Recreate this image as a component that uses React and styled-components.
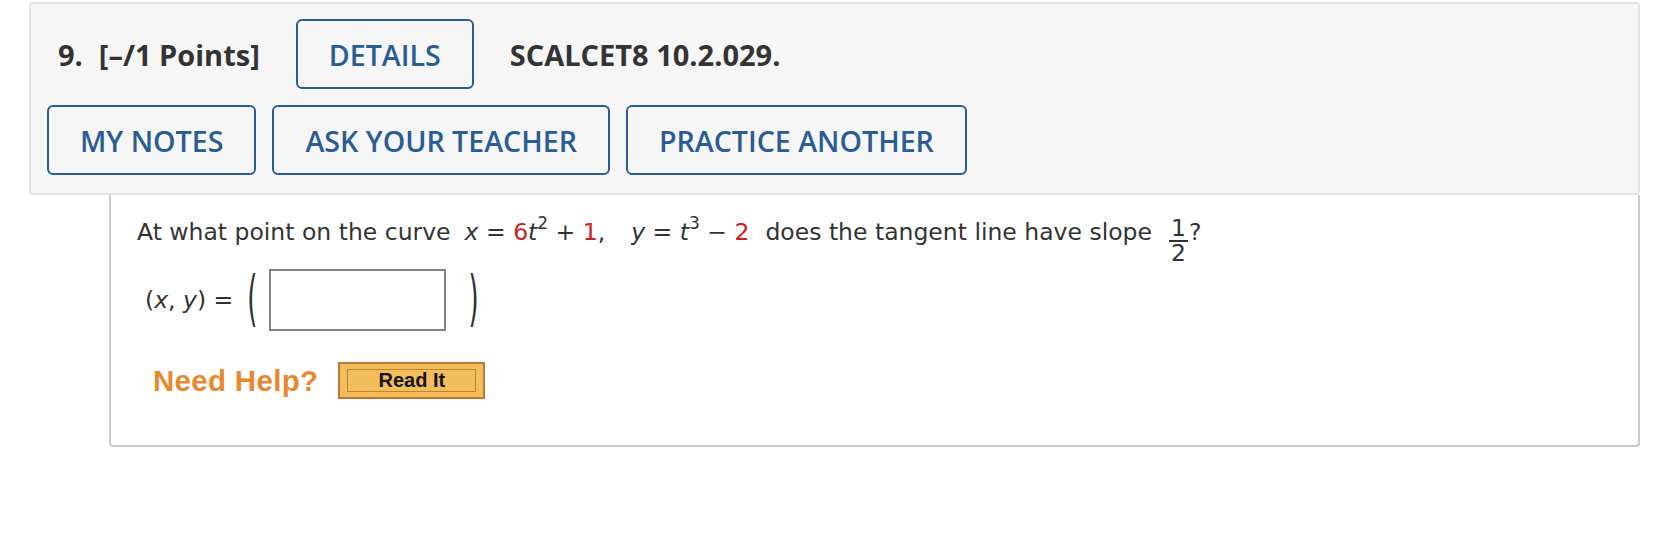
import React from "react";
import styled, { createGlobalStyle } from "styled-components";

const Global = createGlobalStyle`
  html, body { margin: 0; padding: 0; background: #ffffff; }
  * { box-sizing: border-box; }
`;

const Page = styled.div`
  padding: 2px 24px 0 29px;
`;

const Header = styled.div`
  background: #f6f6f6;
  border: 2px solid #e2e2e2;
  border-radius: 4px;
  padding: 15px 16px 18px 16px;
  display: flex;
  flex-direction: column;
  gap: 16px;
  font-family: "Open Sans", "Liberation Sans", sans-serif;
`;

const Row = styled.div`
  display: flex;
  align-items: center;
  gap: ${(p) => p.$gap || 16}px;
`;

const Title = styled.div`
  display: flex;
  align-items: baseline;
  margin-left: 11px;
  font-size: 29px;
  font-weight: 700;
  color: #333333;
  gap: 16px;
  margin-right: 20px;
`;

const OutlineButton = styled.button`
  height: 70px;
  padding: 0 31px;
  border: 2px solid #2a5d91;
  border-radius: 6px;
  background: transparent;
  color: #2a5d91;
  font-family: "Open Sans", "Liberation Sans", sans-serif;
  font-size: 28.6px;
  font-weight: 600;
  white-space: nowrap;
  cursor: pointer;
`;

const Ref = styled.div`
  margin-left: 20px;
  font-size: 29px;
  font-weight: 700;
  color: #333333;
`;

const Body = styled.div`
  margin-left: 80px;
  border: 2px solid #cbcbcb;
  border-top: none;
  border-radius: 0 0 4px 4px;
  padding: 22px 26px 46px;
  display: flex;
  flex-direction: column;
  font-family: "DejaVu Sans", Verdana, sans-serif;
  font-size: 23.5px;
  color: #333333;
`;

const Question = styled.div`
  line-height: 28px;
  white-space: nowrap;
`;

const MathSpan = styled.span`
  margin: 0 ${(p) => p.$right}px 0 ${(p) => p.$left}px;
`;

const Var = styled.i`
  font-style: italic;
`;

const Num = styled.span`
  color: #cc2121;
`;

const Sup = styled.sup`
  font-size: 17px;
  line-height: 0;
  position: relative;
  top: -2px;
`;

const Fraction = styled.span`
  display: inline-flex;
  flex-direction: column;
  align-items: center;
  vertical-align: 4px;
  margin-left: 17px;
  margin-right: 1px;
  line-height: 23px;
`;

const FracTop = styled.span`
  padding: 0 2px;
  border-bottom: 2px solid #333333;
`;

const FracBottom = styled.span``;

const AnswerRow = styled.div`
  display: flex;
  align-items: center;
  height: 64px;
  margin-top: 3px;
  margin-left: 8px;
`;

const Label = styled.span`
  white-space: nowrap;
  margin-right: 14px;
`;

const Paren = styled.span`
  display: inline-block;
  font-size: 26px;
  font-weight: 400;
  transform: scale(1, 2.3);
  color: #333333;
  margin: 0 ${(p) => p.$right}px 0 ${(p) => p.$left}px;
  position: relative;
  top: -2px;
`;

const AnswerBox = styled.input`
  width: 177px;
  height: 62px;
  border: 2px solid #858585;
  background: #ffffff;
  outline: none;
  padding: 0;
`;

const HelpRow = styled.div`
  display: flex;
  align-items: center;
  gap: 20px;
  margin-top: 30px;
  margin-left: 16px;
`;

const NeedHelp = styled.span`
  font-family: "Liberation Sans", Arial, sans-serif;
  font-weight: 700;
  font-size: 29.5px;
  color: #e8892f;
  letter-spacing: 0.3px;
`;

const ReadIt = styled.button`
  width: 147px;
  height: 37px;
  padding: 5px 7px;
  border: 2px solid #bd7a35;
  background: #f3bd5b;
  cursor: pointer;
  display: flex;
`;

const ReadItInner = styled.span`
  flex: 1;
  border: 1px solid #b9833a;
  display: flex;
  align-items: center;
  justify-content: center;
  font-family: "Liberation Sans", Arial, sans-serif;
  font-weight: 700;
  font-size: 20px;
  color: #151515;
`;

export default function App() {
  return (
    <>
      <Global />
      <Page>
        <Header>
          <Row $gap={16}>
            <Title>
              <span>9.</span>
              <span>[–/1 Points]</span>
            </Title>
            <OutlineButton>DETAILS</OutlineButton>
            <Ref>SCALCET8 10.2.029.</Ref>
          </Row>
          <Row $gap={16}>
            <OutlineButton>MY NOTES</OutlineButton>
            <OutlineButton>ASK YOUR TEACHER</OutlineButton>
            <OutlineButton>PRACTICE ANOTHER</OutlineButton>
          </Row>
        </Header>
        <Body>
          <Question>
            At what point on the curve
            <MathSpan $left={14} $right={20}>
              <Var>x</Var> = <Num>6</Num>
              <Var>t</Var>
              <Sup>2</Sup> + <Num>1</Num>,
            </MathSpan>
            <MathSpan $left={6} $right={16}>
              <Var>y</Var> = <Var>t</Var>
              <Sup>3</Sup> − <Num>2</Num>
            </MathSpan>
            does the tangent line have slope
            <Fraction>
              <FracTop>1</FracTop>
              <FracBottom>2</FracBottom>
            </Fraction>
            ?
          </Question>
          <AnswerRow>
            <Label>
              (<Var>x</Var>, <Var>y</Var>) =
            </Label>
            <Paren $left={0} $right={12}>(</Paren>
            <AnswerBox type="text" aria-label="answer" />
            <Paren $left={22} $right={0}>)</Paren>
          </AnswerRow>
          <HelpRow>
            <NeedHelp>Need Help?</NeedHelp>
            <ReadIt>
              <ReadItInner>Read It</ReadItInner>
            </ReadIt>
          </HelpRow>
        </Body>
      </Page>
    </>
  );
}
